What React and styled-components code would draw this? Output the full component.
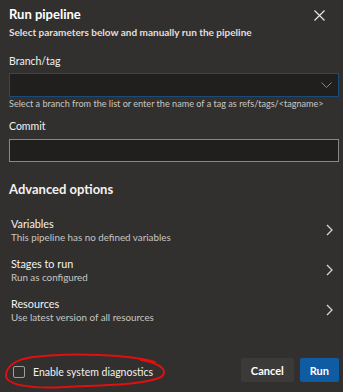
import React from 'react'
import styled, { createGlobalStyle } from 'styled-components'

const GlobalStyle = createGlobalStyle`
  html, body {
    margin: 0;
    padding: 0;
    background: #31302e;
  }
  * {
    box-sizing: border-box;
  }
`

const options = [
  { title: 'Variables', sub: 'This pipeline has no defined variables' },
  { title: 'Stages to run', sub: 'Run as configured' },
  { title: 'Resources', sub: 'Use latest version of all resources' },
]

const Chevron = ({ dir = 'right' }) =>
  dir === 'right' ? (
    <svg width="7" height="12" viewBox="0 0 7 12">
      <path d="M1 1l5 5-5 5" fill="none" stroke="#d6d4d2" strokeWidth="1.3" />
    </svg>
  ) : (
    <svg width="11" height="6" viewBox="0 0 11 6">
      <path d="M0.5 0.5l5 5 5-5" fill="none" stroke="#8a8886" strokeWidth="1" />
    </svg>
  )

const App = () => {
  return (
    <>
      <GlobalStyle />
      <Panel>
        <Header>
          <div>
            <Title>Run pipeline</Title>
            <Subtitle>Select parameters below and manually run the pipeline</Subtitle>
          </div>
          <Close aria-label="Close">
            <svg width="11" height="11" viewBox="0 0 11 11">
              <path d="M0.5 0.5l10 10M10.5 0.5l-10 10" stroke="#e8e6e4" strokeWidth="1.2" />
            </svg>
          </Close>
        </Header>

        <Field>
          <Label>Branch/tag</Label>
          <Input focused>
            <Chevron dir="down" />
          </Input>
          <Help>Select a branch from the list or enter the name of a tag as refs/tags/&lt;tagname&gt;</Help>
        </Field>

        <Field>
          <Label>Commit</Label>
          <Input short />
        </Field>

        <SectionTitle>Advanced options</SectionTitle>

        <OptionList>
          {options.map(o => (
            <OptionRow key={o.title}>
              <div>
                <OptionTitle>{o.title}</OptionTitle>
                <OptionSub>{o.sub}</OptionSub>
              </div>
              <Chevron />
            </OptionRow>
          ))}
        </OptionList>

        <Footer>
          <CheckLabel>
            <Box />
            Enable system diagnostics
          </CheckLabel>
          <Buttons>
            <Button>Cancel</Button>
            <Button primary>Run</Button>
          </Buttons>
          <Scribble width="166" height="40" viewBox="0 0 166 40">
            <path
              d="M152 10 C 128 3, 70 0, 30 5 C 10 8, 3 16, 3 24 C 4 33, 28 37, 62 35 C 100 33, 142 33, 158 25 C 165 20, 161 12, 138 8"
              fill="none"
              stroke="#e01010"
              strokeWidth="2"
              strokeLinecap="round"
            />
          </Scribble>
        </Footer>
      </Panel>
    </>
  )
}

export default App

const Panel = styled.div`
  width: 343px;
  height: 392px;
  display: flex;
  flex-direction: column;
  padding: 4px 4px 0 9px;
  background: #31302e;
  color: #f3f2f1;
  font-family: Lato, "Open Sans", sans-serif;
  overflow: hidden;
`

const Header = styled.div`
  display: flex;
  justify-content: space-between;
  align-items: flex-start;
`

const Title = styled.div`
  font-size: 13px;
  font-weight: 700;
  line-height: 20px;
  color: #ffffff;
`

const Subtitle = styled.div`
  font-size: 10px;
  font-weight: 700;
  line-height: 14px;
  color: #e1dfdd;
  margin-top: 1px;
`

const Close = styled.button`
  background: none;
  border: 0;
  padding: 0;
  margin: 6px 14px 0 0;
  display: flex;
  cursor: pointer;
`

const Field = styled.div`
  display: flex;
  flex-direction: column;
  margin-top: 15px;
  &:nth-of-type(3) {
    margin-top: 9px;
  }
`

const Label = styled.div`
  font-size: 10.5px;
  line-height: 14px;
  color: #f3f2f1;
`

const Input = styled.div`
  height: ${({ short }) => (short ? 23 : 24)}px;
  margin-top: ${({ short }) => (short ? 6 : 5)}px;
  background: #201f1e;
  border: 1px solid ${({ focused }) => (focused ? '#1b4b78' : '#8a8886')};
  display: flex;
  align-items: center;
  justify-content: flex-end;
  padding-right: 6px;
`

const Help = styled.div`
  font-size: 9.1px;
  line-height: 12px;
  margin-top: 1px;
  color: #c8c6c4;
  white-space: nowrap;
`

const SectionTitle = styled.div`
  font-size: 13px;
  font-weight: 700;
  line-height: 18px;
  margin-top: 18px;
  color: #f3f2f1;
`

const OptionList = styled.div`
  display: flex;
  flex-direction: column;
  margin-top: 12px;
`

const OptionRow = styled.div`
  height: 40px;
  display: flex;
  align-items: center;
  justify-content: space-between;
  padding: 0 6px 0 2px;
`

const OptionTitle = styled.div`
  font-size: 10.8px;
  line-height: 14px;
  color: #f3f2f1;
`

const OptionSub = styled.div`
  font-size: 9.8px;
  line-height: 13px;
  color: #c8c6c4;
`

const Footer = styled.div`
  position: relative;
  margin-top: auto;
  height: 29px;
  display: flex;
  align-items: flex-start;
  justify-content: space-between;
  margin-bottom: 5px;
`

const CheckLabel = styled.label`
  display: flex;
  align-items: center;
  gap: 8px;
  margin: 7px 0 0 4px;
  font-size: 10.5px;
  line-height: 14px;
  color: #f3f2f1;
`

const Box = styled.span`
  width: 12px;
  height: 12px;
  border: 1px solid #a19f9d;
  border-radius: 2px;
`

const Buttons = styled.div`
  display: flex;
  gap: 6px;
`

const Button = styled.button`
  height: 24px;
  padding: 0 ${({ primary }) => (primary ? 10 : 10)}px;
  border: 0;
  border-radius: 2px;
  font-family: inherit;
  font-size: 11px;
  font-weight: 700;
  color: #ffffff;
  background: ${({ primary }) => (primary ? '#0f5ca3' : '#3b3a39')};
`

const Scribble = styled.svg`
  position: absolute;
  left: -6px;
  top: -6px;
  pointer-events: none;
`
